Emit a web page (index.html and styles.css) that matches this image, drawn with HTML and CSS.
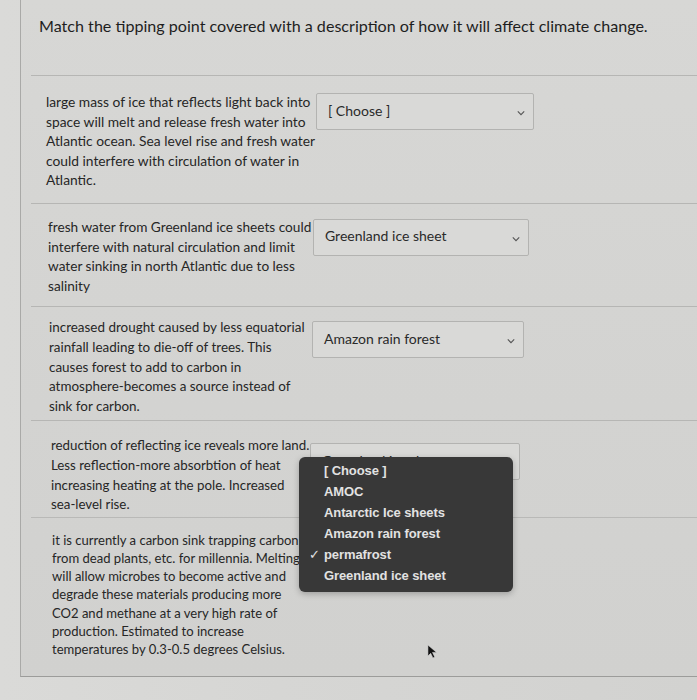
FILE: index.html
```html
<!DOCTYPE html>
<html>
<head>
<meta charset="utf-8">
<link rel="stylesheet" href="styles.css">
</head>
<body>
<div class="page">
  <div class="question">
    <div class="qtext">Match the tipping point covered with a description of how it will affect climate change.</div>
    <div class="answers">
      <div class="row r1">
        <div class="desc">large mass of ice that reflects light back into<br>space will melt and release fresh water into<br>Atlantic ocean. Sea level rise and fresh water<br>could interfere with circulation of water in<br>Atlantic.</div>
        <div class="select"><span>[ Choose ]</span><svg class="chev" viewBox="0 0 10 6"><path d="M1 1 L5 5 L9 1" fill="none" stroke="#555" stroke-width="1.4"/></svg></div>
      </div>
      <div class="row r2">
        <div class="desc">fresh water from Greenland ice sheets could<br>interfere with natural circulation and limit<br>water sinking in north Atlantic due to less<br>salinity</div>
        <div class="select"><span>Greenland ice sheet</span><svg class="chev" viewBox="0 0 10 6"><path d="M1 1 L5 5 L9 1" fill="none" stroke="#555" stroke-width="1.4"/></svg></div>
      </div>
      <div class="row r3">
        <div class="desc">increased drought caused by less equatorial<br>rainfall leading to die-off of trees. This<br>causes forest to add to carbon in<br>atmosphere-becomes a source instead of<br>sink for carbon.</div>
        <div class="select"><span>Amazon rain forest</span><svg class="chev" viewBox="0 0 10 6"><path d="M1 1 L5 5 L9 1" fill="none" stroke="#555" stroke-width="1.4"/></svg></div>
      </div>
      <div class="row r4">
        <div class="desc">reduction of reflecting ice reveals more land.<br>Less reflection-more absorbtion of heat<br>increasing heating at the pole. Increased<br>sea-level rise.</div>
        <div class="select"><span>Greenland ice sheet</span><svg class="chev" viewBox="0 0 10 6"><path d="M1 1 L5 5 L9 1" fill="none" stroke="#555" stroke-width="1.4"/></svg></div>
      </div>
      <div class="row r5">
        <div class="desc">it is currently a carbon sink trapping carbon<br>from dead plants, etc. for millennia. Melting<br>will allow microbes to become active and<br>degrade these materials producing more<br>CO2 and methane at a very high rate of<br>production. Estimated to increase<br>temperatures by 0.3-0.5 degrees Celsius.</div>
        <div class="select"><span>permafrost</span><svg class="chev" viewBox="0 0 10 6"><path d="M1 1 L5 5 L9 1" fill="none" stroke="#555" stroke-width="1.4"/></svg></div>
        <ul class="menu">
          <li>[ Choose ]</li>
          <li>AMOC</li>
          <li>Antarctic Ice sheets</li>
          <li>Amazon rain forest</li>
          <li class="checked"><span class="check">✓</span>permafrost</li>
          <li>Greenland ice sheet</li>
        </ul>
        <svg class="cursor" viewBox="0 0 12 16"><path d="M1 1 L1 13 L4 10 L6.5 15 L8.5 14 L6 9 L10.5 9 Z" fill="#111" stroke="#ddd" stroke-width="0.6"/></svg>
      </div>
    </div>
  </div>
</div>
</body>
</html>
```

FILE: styles.css
```css
html, body {
  margin: 0;
  padding: 0;
}
body {
  width: 697px;
  height: 700px;
  overflow: hidden;
  background: linear-gradient(90deg, #dadad8 0%, #d6d6d4 40%, #d2d2d0 100%);
  font-family: Lato, "Liberation Sans", sans-serif;
  color: #2a2a2a;
}
.page {
  padding-left: 20px;
  height: 700px;
  box-sizing: border-box;
}
.question {
  border-left: 1px solid #a9a9a7;
  border-bottom: 1px solid #9c9c9a;
  background: linear-gradient(180deg, #d7d7d5 0%, #d3d3d1 60%, #d1d1cf 100%);
  height: 677px;
  box-sizing: border-box;
}
.qtext {
  font-size: 16.1px;
  padding: 16px 0 0 18px;
  height: 75px;
  box-sizing: border-box;
  color: #1e1e1e;
}
.answers {
  margin-left: 10px;
}
.row {
  display: flex;
  align-items: flex-start;
  border-top: 1px solid #b6b6b4;
  padding: 15px 0 11px 15px;
  position: relative;
}
.r1 { padding-top: 16px; padding-bottom: 13px; }
.r2 { padding-top: 14px; padding-bottom: 10px; padding-left: 17px; }
.r3 { padding-top: 11px; padding-bottom: 4px; padding-left: 18px; }
.r4 { padding-top: 15px; padding-bottom: 2px; padding-left: 20px; }
.r5 { padding-top: 13px; padding-left: 21px; border-top-color: #b9b9b7; }
.desc {
  font-size: 13.8px;
  line-height: 19.6px;
  width: 268px;
  flex: none;
  white-space: nowrap;
  color: #262626;
}
.r2 .desc { font-size: 13.65px; }
.r3 .desc { font-size: 13.45px; }
.r4 .desc { font-size: 13.3px; }
.r5 .desc { font-size: 13.05px; line-height: 18.2px; }
.select {
  width: 218px;
  height: 37px;
  box-sizing: border-box;
  border: 1px solid #b3b3b1;
  border-radius: 2px;
  background: #d9d9d7;
  display: flex;
  align-items: center;
  justify-content: space-between;
  padding: 0 8px 0 11px;
  font-size: 14px;
  color: #2a2a2a;
  margin-left: 2px;
  margin-top: 1px;
}
.select span { margin-top: -3px; }
.chev {
  width: 8px;
  height: 6px;
  margin-top: 3px;
}
.r2 .select { width: 216px; margin-left: -3px; margin-top: 1px; }
.r3 .select { width: 212px; margin-left: -5px; margin-top: 3px; }
.r4 .select { width: 210px; margin-left: -9px; margin-top: 7px; }
.r5 .select { width: 207px; margin-left: -15px; margin-top: 9px; }
.menu {
  position: absolute;
  left: 268px;
  top: -61px;
  width: 214px;
  margin: 0;
  padding: 3px 0 6px;
  list-style: none;
  background: #383838;
  border-radius: 6px;
  box-shadow: 0 2px 6px rgba(0,0,0,0.25);
  font-family: "Liberation Sans", Arial, sans-serif;
  font-size: 13px;
  font-weight: bold;
  color: #e2e2e2;
}
.menu li {
  height: 21px;
  line-height: 21px;
  padding-left: 25px;
  position: relative;
  letter-spacing: -0.1px;
}
.menu li .check {
  position: absolute;
  left: 10px;
  font-weight: normal;
}
.cursor {
  position: absolute;
  left: 396px;
  top: 126px;
  width: 11px;
  height: 15px;
}
```
